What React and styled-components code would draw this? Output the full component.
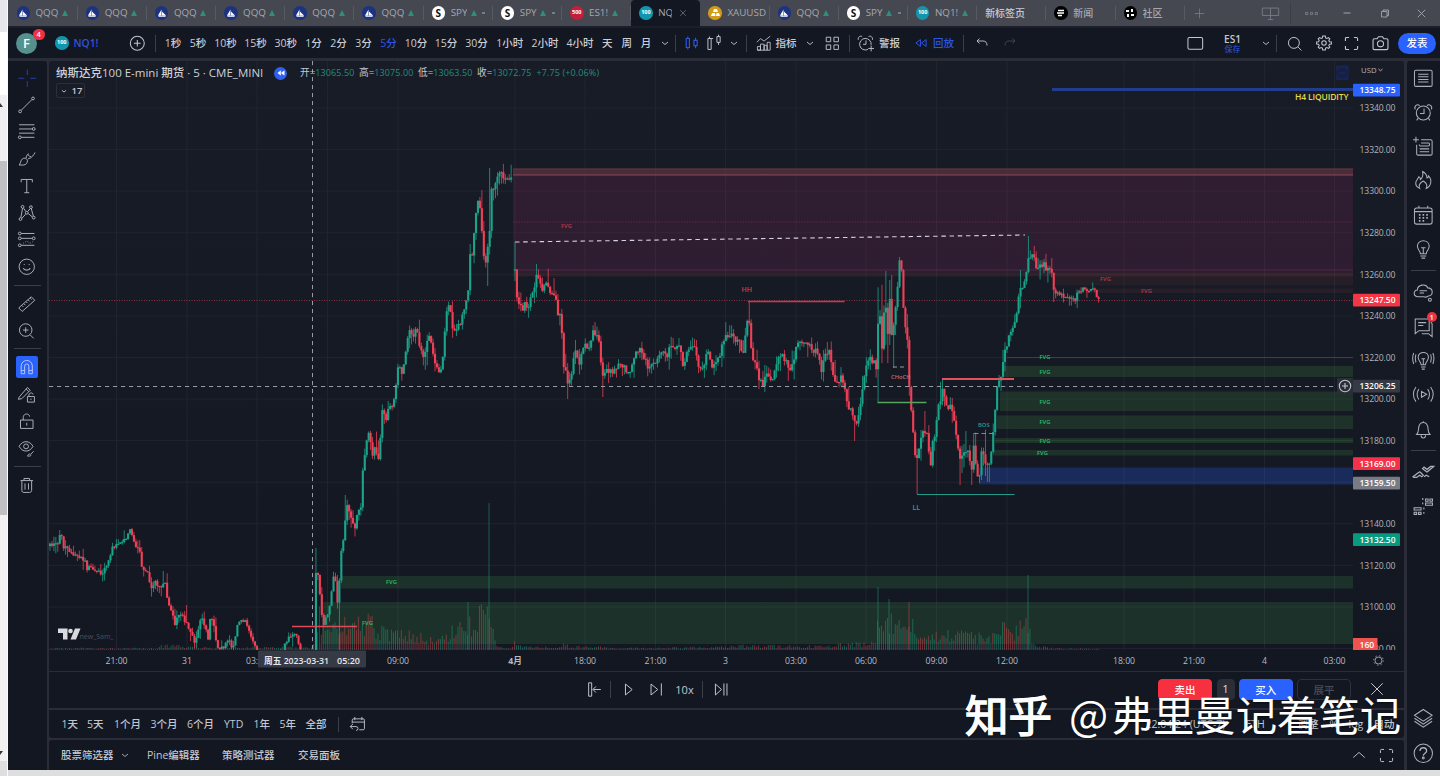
import styled, { createGlobalStyle, css } from 'styled-components'

const GlobalStyle = createGlobalStyle`
  * {
    box-sizing: border-box;
  }
  body {
    margin: 0;
    background: #dededf;
    color: #c4c7d0;
    font-family: 'Open Sans', 'Noto Sans CJK SC', sans-serif;
    font-size: 11px;
    line-height: 1;
    overflow: hidden;
  }
`

const Desktop = styled.div`
  display: flex;
  align-items: flex-start;
  width: 1440px;
  height: 776px;
`

const PageEdge = styled.div`
  display: flex;
  flex-direction: column;
  width: 7.5px;
  height: 776px;
  flex: none;
  overflow: hidden;
  border-right: 1px solid #fafafa;
`

const EdgePart = styled.div`
  height: ${(props) => props.$h}px;
  padding-top: ${(props) => props.$pad || 0}px;
  background: ${(props) => props.$bg};
  svg {
    display: block;
  }
`

const Window = styled.div`
  display: flex;
  flex-direction: column;
  flex: 1;
  min-width: 0;
  height: 770px;
  background: #2a2d38;
`

const TabBar = styled.div`
  display: flex;
  align-items: center;
  height: 26px;
  flex: none;
  padding-left: 1px;
  background: #454751;
`

const TabItem = styled.div`
  display: flex;
  align-items: center;
  width: 69.2px;
  height: 26px;
  flex: none;
  padding-left: 8px;
  gap: 5.5px;
  color: ${(props) => (props.$bright ? '#c9cbd1' : '#a6a8b0')};
  white-space: nowrap;
  overflow: hidden;
  background: linear-gradient(#575963, #575963) right center / 1px 14px no-repeat;
  ${(props) =>
    props.$active &&
    css`
      background: #131722;
      border-radius: 4px 4px 0 0;
    `}
`

const Favicon = styled.span`
  display: flex;
  align-items: center;
  justify-content: center;
  width: 13.5px;
  height: 13.5px;
  flex: none;
  border-radius: 50%;
  background: ${(props) => props.$bg};
  color: ${(props) => props.$fg || '#fff'};
  font-size: ${(props) => props.$size || 5.5}px;
  font-weight: 700;
`

const TabText = styled.span`
  flex: none;
  max-width: ${(props) => props.$max || 60}px;
  overflow: hidden;
  font-size: ${(props) => props.$size || 9.8}px;
  line-height: 14px;
  font-weight: 500;
`

const UpMark = styled.i`
  border: 3.3px solid transparent;
  border-top: 0;
  border-bottom: 6.5px solid #2f8f7b;
  margin-left: -2px;
`

const MoreMark = styled.i`
  width: 3px;
  height: 2px;
  background: #6d8580;
`

const WindowControls = styled.div`
  display: flex;
  align-items: center;
  margin-left: auto;
  color: #a4a6ae;
`

const Slot = styled.span`
  display: flex;
  align-items: center;
  justify-content: center;
  flex: none;
  position: relative;
  width: ${(props) => props.$w}px;
  color: ${(props) => props.$color || 'inherit'};
  white-space: nowrap;
`

const Spacer = styled.div`
  flex: 1;
`

const Divider = styled.span`
  width: 1px;
  height: ${(props) => props.$h || 17}px;
  flex: none;
  margin: 0 ${(props) => props.$gap || 0}px;
  background: #3c3f4a;
`

const Toolbar = styled.div`
  display: flex;
  align-items: center;
  height: 32px;
  flex: none;
  margin-bottom: 2.5px;
  background: #131722;
  border-top: 2px solid #1c1f2b;
`

const Avatar = styled.span`
  display: flex;
  align-items: center;
  justify-content: center;
  width: 21px;
  height: 21px;
  border-radius: 50%;
  background: #55918f;
  color: #fff;
  font-size: 13px;
  font-weight: 600;
  position: relative;
`

const Badge = styled.span`
  position: absolute;
  top: ${(props) => props.$top}px;
  left: ${(props) => props.$left}px;
  display: flex;
  align-items: center;
  justify-content: center;
  width: ${(props) => props.$size}px;
  height: ${(props) => props.$size}px;
  border-radius: 50%;
  background: #ee3144;
  color: #fff;
  font-size: 7.5px;
  font-weight: 600;
`

const SymbolName = styled.span`
  width: 58.5px;
  padding-left: 5px;
  color: #3452d8;
  font-size: 10.3px;
  font-weight: 600;
`

const Interval = styled(Slot)`
  font-size: 10.5px;
  font-weight: 500;
  color: ${(props) => (props.$active ? '#2c55e8' : '#cbcdd5')};
`

const ToolbarRight = styled.div`
  display: flex;
  align-items: center;
  margin-left: auto;
`

const LayoutName = styled.div`
  display: flex;
  flex-direction: column;
  align-items: center;
  gap: 1px;
  width: 51px;
  font-size: 10px;
  font-weight: 600;
  small {
    font-size: 8px;
    font-weight: 400;
    color: #2c55e8;
  }
`

const Publish = styled.button`
  width: 38px;
  height: 21px;
  margin: 0 4px 0 3px;
  padding: 0 0 1px;
  border: none;
  border-radius: 11px;
  background: #2962ff;
  color: #fff;
  font: 500 10.5px 'Noto Sans CJK SC', sans-serif;
`

const Body = styled.div`
  display: flex;
  flex: 1;
  min-height: 0;
`

const LeftRail = styled.div`
  display: flex;
  flex-direction: column;
  align-items: center;
  width: 39px;
  flex: none;
  margin-right: 2.5px;
  padding-top: 4px;
  background: #131722;
  border-radius: 0 3px 0 0;
`

const ToolButton = styled.div`
  display: flex;
  align-items: center;
  justify-content: center;
  width: 22px;
  height: 22px;
  flex: none;
  margin: 2.5px 0;
  border-radius: 2px;
  color: ${(props) => props.$color || '#adb0b9'};
  background: ${(props) => (props.$active ? '#2962ff' : 'transparent')};
`

const RailLine = styled.div`
  width: ${(props) => props.$w}px;
  height: 1px;
  flex: none;
  margin: ${(props) => props.$gap}px 0;
  background: #3c3f4a;
`

const RightRail = styled.div`
  display: flex;
  flex-direction: column;
  align-items: center;
  width: 33.5px;
  flex: none;
  margin-left: 3px;
  padding-top: 0.5px;
  background: #131722;
  border-radius: 3px 0 0 0;
`

const WidgetButton = styled.div`
  display: flex;
  align-items: center;
  justify-content: center;
  position: relative;
  width: 33px;
  height: 34.2px;
  flex: none;
  color: #adb0b9;
`

const Center = styled.div`
  display: flex;
  flex-direction: column;
  flex: 1;
  min-width: 0;
`

const ChartPane = styled.div`
  position: relative;
  height: 610.5px;
  flex: none;
  overflow: hidden;
  border-radius: 3px 3px 0 0;
  background: linear-gradient(#181c27, #131722);
  svg {
    display: block;
  }
`

const Legend = styled.div`
  position: absolute;
  top: 5px;
  left: 7px;
  display: flex;
  align-items: center;
  height: 15px;
  white-space: nowrap;
`

const LegendTitle = styled.span`
  width: 218px;
  font-size: 11.5px;
  font-weight: 500;
  color: #cfd1d8;
`

const RewindDot = styled.span`
  display: flex;
  align-items: center;
  justify-content: center;
  width: 13px;
  height: 13px;
  border-radius: 50%;
  background: #2f5ff0;
  color: #fff;
  margin-right: 13px;
`

const Quote = styled.span`
  width: ${(props) => props.$w}px;
  font-size: 9.7px;
  b {
    font-weight: 400;
    font-size: 9px;
    letter-spacing: 0.12px;
    color: #238e7c;
  }
`

const Collapse = styled.div`
  position: absolute;
  top: 22.5px;
  left: 7px;
  display: flex;
  align-items: center;
  justify-content: center;
  gap: 3px;
  width: 29px;
  height: 15px;
  border: 1px solid #2b2f3a;
  border-radius: 2px;
  font-size: 9.5px;
  font-weight: 600;
`

const BarRow = styled.div`
  display: flex;
  align-items: center;
  height: ${(props) => props.$h}px;
  flex: none;
  margin-top: ${(props) => props.$gap}px;
  padding: ${(props) => props.$top || 0}px 0 ${(props) => props.$bottom || 0}px ${(props) => props.$pad || 0}px;
  background: #131722;
  border-radius: ${(props) => props.$round || '0'};
  font-weight: 500;
  white-space: nowrap;
`

const RowItem = styled.span`
  display: flex;
  align-items: center;
  width: ${(props) => props.$w}px;
  flex: none;
  font-size: 10.5px;
`

const Push = styled.div`
  display: flex;
  align-items: center;
  margin-left: auto;
`

const TradeButton = styled.button`
  width: ${(props) => props.$w}px;
  height: 21px;
  margin-right: 4.5px;
  padding: 0;
  border: 1px solid ${(props) => props.$line || props.$bg};
  border-radius: 4px;
  background: ${(props) => props.$bg};
  color: ${(props) => props.$fg || '#fff'};
  font: 500 10.5px 'Open Sans', 'Noto Sans CJK SC', sans-serif;
`

const Signature = styled.div`
  position: absolute;
  left: 965px;
  top: 689px;
  display: flex;
  align-items: center;
  height: 50px;
  color: #fff;
  font-family: 'Noto Sans CJK SC', sans-serif;
  font-size: 41.4px;
  white-space: nowrap;
  text-shadow: 0 1px 2px rgba(0, 0, 0, 0.5);
  strong {
    width: 104px;
    font-size: 43.5px;
    font-weight: 400;
    -webkit-text-stroke: 1.4px #fff;
  }
  span {
    width: 42.5px;
  }
`

// all glyphs share a 28 unit box
const glyphs = {
  cross: <path d="M14 2v8M14 18v8M2 14h8M18 14h8" />,
  trend: (
    <>
      <circle cx="4.5" cy="23.5" r="2" />
      <circle cx="23" cy="5" r="2" />
      <path d="M6 22 21.5 6.500" />
    </>
  ),
  fib: (
    <>
      <path d="M3 4h22M3 10h19M3 16h22M6 22h19" />
      <circle cx="24" cy="10" r="2" />
      <circle cx="4" cy="22" r="2" />
    </>
  ),
  brush: <path d="M3 23c2-1 2-7 5-9s7 0 7 3-2 6-6 6zM13 13c1-4 2-6 4-6M16 14c6-1 8-6 10-9M16 8c1 2 2 3 4 3" />,
  text: <path d="M6 9V5h16v4M14 5v19M10.500 24h7" />,
  pattern: (
    <>
      <circle cx="5" cy="23" r="2" />
      <circle cx="8" cy="5.500" r="2" />
      <circle cx="14" cy="14" r="2" />
      <circle cx="20" cy="6" r="2" />
      <circle cx="24" cy="21" r="2" />
      <path d="M5.500 21 8 7.500M9.500 7.500l3 4.500M19 8l-3.500 4M20.500 8l3 11M7 22l5.500-6M16 15l6 5" />
    </>
  ),
  forecast: (
    <>
      <circle cx="4" cy="5" r="2" />
      <circle cx="4" cy="12" r="2" />
      <circle cx="4" cy="22" r="2" />
      <circle cx="24" cy="12" r="2" />
      <path d="M6 5h19M6 12h16M6 22h19" />
      <path d="m9 19 5-3 5 3 5-3" strokeDasharray="1 2" />
    </>
  ),
  smile: (
    <>
      <circle cx="14" cy="14" r="11" />
      <path d="M9 16c1.500 4 8.500 4 10 0M10.500 10.500v1M17.500 10.500v1" strokeWidth="1.8" />
    </>
  ),
  ruler: <path d="m2.500 20 18-16 5 5-18 16zM7 16.500l2 2M10 14l2 2M13 11l2 2M16 8.500l2 2M19 6l2 2" />,
  zoom: (
    <>
      <circle cx="12.500" cy="13" r="9" />
      <path d="M12.500 9v8M8.500 13h8M19 20l5 5" />
    </>
  ),
  magnet: <path d="M6 24V13a8 8 0 0 1 16 0v11h-5V13a3 3 0 0 0-6 0v11zM6 19.500h5M17 19.500h5" />,
  pencilLock: (
    <path d="M3 19 15 5l4 4L7 21l-5 1zM13 7l4 4M15 18h10v8H15zM17 18v-2c0-4 6-4 6-1M20 21v2" />
  ),
  lock: <path d="M5 13h18v12H5zM9 13V9c0-6 9-6 9-1M14 17v4" />,
  eye: (
    <>
      <path d="M3 12c5-9 15-9 20 0-5 9-15 9-20 0zM15 26c1-1 1-3 3-3s3 3 0 3zM20 23l4-4" />
      <circle cx="13" cy="12" r="3.500" />
    </>
  ),
  trash: <path d="M5 8h18M10 8V5h8v3M7 8v14c0 2 1 3 3 3h8c2 0 3-1 3-3V8M11.500 12v9M16.500 12v9" />,
  list: <path d="M4 3h20q2 0 2 2v18q0 2-2 2H4q-2 0-2-2V5q0-2 2-2zM7 8.500h14M7 12h14M7 15.500h14M7 19h14" />,
  alarm: (
    <>
      <circle cx="14" cy="15" r="9.500" />
      <path d="M15 9v6.500H9.500M3 10c-2-5 3-8 6-5M25 10c2-5-3-8-6-5M7 22l-2 3M21 22l2 3" />
    </>
  ),
  alarmPlus: (
    <>
      <path d="M22 17a9 9 0 1 0-5 7M14 10v6H9.500M2 9c-1-4 3-7 6-5M24 9c1-4-3-7-6-5M22 18v9M17.500 22.500h9" />
    </>
  ),
  addList: <path d="M11 5h13q2 0 2 2v17q0 2-2 2H7q-2 0-2-2V12M0 5h8M4 1v8M11 9.500h10q1.500 0 1.500 2t-1.500 2H10q-1.500 0-1.500-2M9 17.500h13M9 21.500h13" />,
  fire: <path d="M9 25c-4-2-6-5-5-9 1-3 3-4 4-7 2 1 2 3 2 4 3-2 4-6 3-11 4 2 6 5 6 9 1 0 2-1 2-3 3 3 4 6 3 10-1 4-3 6-6 7 2-4 1-7-4-10-5 3-7 6-5 10z" />,
  calendar: (
    <>
      <path d="M5 4h18q3 0 3 3v16q0 3-3 3H5q-3 0-3-3V7q0-3 3-3zM8 1v3M20 1v3M2 9h24" />
      <path d="M8 13.500h2.200M13 13.500h2.200M18 13.500h2.200M8 17.500h2.200M13 17.500h2.200M18 17.500h2.200M8 21.500h2.200M13 21.500h2.200" strokeWidth="2.400" />
    </>
  ),
  bulb: <path d="M10 20c0-4-4-5-4-10 0-10 16-10 16 0 0 5-4 6-4 10zM10 23h8M11.500 26h5M11 12h6M14 12v8" />,
  cloud: (
    <>
      <path d="M7 20c-7 0-7-9-1-9 0-8 12-9 14-3 8 0 8 11 1 11-3 3-6 1-7 1zM9 12h10M9 15h6" />
      <circle cx="23" cy="24" r="2" />
    </>
  ),
  chat: <path d="M3 4h17q2 0 2 2v14H8l-5 4zM7 9h11M7 13h7M24 9q2 0 2 2v17l-5-4H12" />,
  bulbWave: (
    <path d="M11 20c0-4-4-5-4-10 0-9 14-9 14 0 0 5-4 6-4 10zM11 23h6M12 26h4M11.500 12h5M14 12v8M4 6q-2 5 0 11M1 4q-3 7 0 15M24 6q2 5 0 11M27 4q3 7 0 15" />
  ),
  stream: <path d="m11.500 10 7 4-7 4zM8 7q-5 7 0 14M20 7q5 7 0 14M4 4q-7 10 0 20M24 4q7 10 0 20" />,
  bell: <path d="M5 21c3-3 2-6 3-11 2-7 10-7 12 0 1 5 0 8 3 11zM11 22c0 5 6 5 6 0M14 3v2" />,
  shake: <path d="m0 20 8-6q1-1 2 0l4 4-2 2-3-2-4 3H1zM28 6l-8 7q-1 1-2 0l-5-4 2-2 4 3 5-4zM15 20l3-2 4 2" strokeWidth="1.700" />,
  dom: (
    <>
      <path d="M17 4h3.500v3H17zM23 4h3.500v3H23zM17 9.500h9.500v3H17zM1.500 16H11v3H1.500zM1.500 22H5v3H1.500zM7.500 22H11v3H7.500z" />
      <path d="M12.500 4h1.500M12.500 10h1.500M14 17h1.500M14 23h1.500" strokeWidth="2.600" />
    </>
  ),
  layers: <path d="m14 2 12 8-12 8L2 10zM2 14l12 8 12-8M2 18l12 8 12-8" />,
  help: (
    <>
      <circle cx="14" cy="14" r="12.500" />
      <path d="M9.500 11c0-6 9-6 9 0 0 3-4.500 3-4.500 6.500" strokeWidth="1.800" />
      <circle cx="14" cy="20.500" r="1.300" />
    </>
  ),
  plusCircle: (
    <>
      <circle cx="14" cy="14" r="9.500" />
      <path d="M14 9.500v9M9.500 14h9" />
    </>
  ),
  down: <path d="m8 12 6 5 6-5" />,
  up: <path d="m5 18 9-8 9 8" />,
  candles: <path d="M5 7h5v14H5zM7.500 4v3M7.500 21v3M17 10h5v8h-5zM19.500 6v4M19.500 18v4" />,
  hollow: <path d="M3 7h5v17H3zM5.500 4v3M17 4h5v9h-5zM19.500 1v3M19.500 13v4M8 7h3" />,
  indicators: <path d="M3 12l6-6 6 4 10-8M4 25v-6h5v6zM9 25V15h6v10M15 25v-8h5v8M20 25V12h5v13M4 25h21" />,
  grid: <path d="M5 5h7v7H5zM17 5h7v7h-7zM5 17h7v7H5zM17 17h7v7h-7z" />,
  rewind: <path d="M13 8v12l-8-6zM23 8v12l-8-6z" />,
  undo: <path d="m9 5-5 5 5 5M4 10h12q8 0 8 9" />,
  redo: <path d="m19 5 5 5-5 5M24 10H12q-8 0-8 9" />,
  rect: <path d="M6 6h16q2 0 2 2v12q0 2-2 2H6q-2 0-2-2V8q0-2 2-2z" />,
  search: (
    <>
      <circle cx="13" cy="13" r="9" />
      <path d="m19.500 19.500 6 6" />
    </>
  ),
  gear: (
    <>
      <path d="m12 3-.5 3-2 1L7 5.500 5 7.500 6.500 10l-1 2-3 .5v3l3 .5 1 2L5 20.500 7 22.500 9.500 21l2 1 .5 3h4l.5-3 2-1 2.500 1.500 2-2L21.500 18l1-2 3-.5v-3l-3-.5-1-2L23 7.500 21 5.500 18.500 7l-2-1L16 3z" />
      <circle cx="14" cy="14" r="3.500" />
    </>
  ),
  full: <path d="M4 10V6q0-2 2-2h4M18 4h4q2 0 2 2v4M24 18v4q0 2-2 2h-4M10 24H6q-2 0-2-2v-4" />,
  camera: (
    <>
      <path d="M5 7h4l2-3h6l2 3h4q2 0 2 2v12q0 2-2 2H5q-2 0-2-2V9q0-2 2-2z" />
      <circle cx="14" cy="14.500" r="4.500" />
    </>
  ),
  close: <path d="M6 6l16 16M22 6 6 22" />,
  minus: <path d="M7 14h14" strokeWidth="2" />,
  plus: <path d="M14 5v18M5 14h18" />,
  restore: <path d="M7 11h11v11H7zM10 11V8h11v11h-3" strokeWidth="1.800" />,
  dots: <path d="M3 12h4v4H3zM12 12h4v4h-4zM21 12h4v4h-4z" />,
  screens: <path d="M2 6h24v11H2zM14 6v17M10 23h8" />,
  goBar: <path d="M6 3h5v22H6zM26 14H14M18 9l-5 5 5 5" />,
  play: <path d="M9 5v18l11-9z" />,
  step: <path d="M5 5v18l11-9zM22 4v20" />,
  stepEnd: <path d="M4 5v18l10-9zM18 4v20M23 4v20" />,
  goDate: <path d="M5 13V8q0-2 2-2h15q2 0 2 2v13q0 2-2 2h-6M9 3v5M20 3v5M5 11h19M2 18h9q3 0 3 3t-3 3M6 14l-4 4 4 4" />,
}

const Icon = ({ name, size = 20.6, stroke = 1.4, fill = 'none' }) => (
  <svg
    width={size}
    height={size}
    viewBox="0 0 28 28"
    fill={fill}
    stroke="currentColor"
    strokeWidth={stroke}
    overflow="visible"
  >
    {glyphs[name]}
  </svg>
)

const Boat = () => (
  <svg width="10" height="10" viewBox="0 0 10 10" fill="#fff">
    <path d="M1 7.500 4.500 1.500v6zM5 7.500V3.500l4 4zM1 7.800h8l-.6 1H1.800z" />
  </svg>
)

const tabs = [
  ...Array(6).fill({ icon: 'boat', text: 'QQQ', up: true }),
  { icon: 'spy', text: 'SPY', up: true, more: true },
  { icon: 'spy', text: 'SPY', up: true, more: true },
  { icon: 'es', text: 'ES1!', up: true },
  { icon: 'nq', text: 'NQ', active: true },
  { icon: 'gold', text: 'XAUUSD' },
  { icon: 'boat', text: 'QQQ', up: true },
  { icon: 'spy', text: 'SPY', up: true, more: true },
  { icon: 'nq', text: 'NQ1!', up: true },
  { text: '新标签页', bright: true },
  { icon: 'news', text: '新闻' },
  { icon: 'people', text: '社区' },
]

const favicons = {
  boat: <Favicon $bg="#1c3382"><Boat /></Favicon>,
  spy: <Favicon $bg="#fff" $fg="#111" $size={10}>S</Favicon>,
  es: <Favicon $bg="#c21f3a">500</Favicon>,
  nq: <Favicon $bg="#1295ad">100</Favicon>,
  gold: (
    <Favicon $bg="#d29a19">
      <svg width="9" height="8" viewBox="0 0 9 8" fill="#fff">
        <path d="M3 0h3l1 3H2zM1 4h3l.5 3H0zM5.500 4H8l1 3H5z" />
      </svg>
    </Favicon>
  ),
  news: (
    <Favicon $bg="#000">
      <svg width="8" height="8" viewBox="0 0 8 8" stroke="#fff" strokeWidth="1.300">
        <path d="M1 1.500h6M0 4h7M1 6.500h4" />
      </svg>
    </Favicon>
  ),
  people: (
    <Favicon $bg="#000">
      <svg width="8" height="8" viewBox="0 0 8 8" fill="#fff">
        <path d="M0 1h3v2H0zM5 0h2v3H5zM1 5h2v3H1zM5 5h3v2H5z" />
      </svg>
    </Favicon>
  ),
}

const intervals = [
  ['1秒', 25], ['5秒', 25], ['10秒', 30], ['15秒', 30], ['30秒', 30.5], ['1分', 25],
  ['2分', 25], ['3分', 25], ['5分', 25], ['10分', 30], ['15分', 30], ['30分', 31],
  ['1小时', 35.5], ['2小时', 35], ['4小时', 35], ['天', 19.5], ['周', 19.5], ['月', 19],
]

const leftTools = [
  'cross', 'trend', 'fib', 'brush', 'text', 'pattern', 'forecast', 'smile', '-',
  'ruler', 'zoom', '-', 'magnet', 'pencilLock', 'lock', 'eye', '-', 'trash',
]

const widgets = [
  'list', 'alarm', 'addList', 'fire', 'calendar', 'bulb', '-',
  'cloud', 'chat', 'bulbWave', 'stream', 'bell', '-', 'shake', 'dom',
]

const ranges = [
  ['1天', 25.5], ['5天', 27], ['1个月', 36.5], ['3个月', 36.5], ['6个月', 37],
  ['YTD', 29.5], ['1年', 26], ['5年', 26], ['全部', 32],
]

// pane coordinates: x 49..1403, y 61..671
const runs = [
  '50 546 54 541 58 544 60 534 62 537 64 548 70 550 73 558 78 555 84 559 87 569 91 566 95 571 99 569 102 576 105 569 108 560 112 549 116 544 121 542 126 538 130 531 132 537 135 546 139 547 142 570 147 572 151 588 155 580 159 588 163 584 165 582 168 602 172 612 175 626 178 612 182 617 187 622 190 630 194 643 197 636 201 618 205 625 208 641 210 618 214 625 217 645 220 651 226 643 230 641 233 649 237 628 241 620 245 622 250 635 254 645 258 652',
  '279 652 283 649 288 640 292 633 296 634 299 644 302 653',
  '314 655 316 572 318 573 320 598 323 625 327 615 330 604 333 577 335 575 337 592 338 622 340 560 343 545 345 520 347 507 349 510 352 519 355 528 358 510 361 505 362 480 365 450 368 427 370 440 372 455 375 447 378 460 381 435 383 402 385 425 388 407 392 405 395 395 397 370 399 362 402 372 405 360 407 345 409 325 413 340 416 328 419 343 421 345 423 362 426 345 429 332 432 350 435 362 439 374 442 366 445 330 447 305 449 303 451 315 453 328 456 330 460 325 463 315 466 302 468 300 469 258 472 255 474 235 477 205 479 197 481 215 483 255 486 264 488 245 490 225 491 190 494 192 496 185 497 174 501 175 505 179 508 180 511 175 513 172',
  '515 270 517 295 519 303 522 310 526 303 528 311 531 298 534 290 536 273 539 277 543 292 546 280 549 290 552 293 555 294 557 310 561 318 563 360 567 380 570 383 573 360 575 350 579 365 583 352 586 345 588 355 591 340 594 330 597 335 599 345 601 365 603 373 607 370 612 371 618 366 624 368 630 372 633 362 636 353 640 346 644 360 648 366 655 364 660 352 668 355 670 345 676 350 680 348 683 365 688 348 692 343 695 350 699 370 704 365 707 352 711 358 713 370 716 362 720 355 724 340 728 335 734 338 740 343 743 356 746 330 748 312 750 335 752 358 755 362 759 378 763 387 767 372 772 382 776 362 780 355 785 360 790 370 794 362 797 345 802 340 808 345 814 350 818 353 821 373 825 355 829 350 833 375 836 385 841 378 845 390 848 408 852 410 857 425 860 410 863 385 867 365 870 358 874 362 877 376 878 320 880 308 882 342 884 310 885 276 887 332 890 306 892 340 894 325 897 305 898 270 901 270 903 300 905 325 907 328 908 370 910 400 912 420 914 445 917 458 918 468 920 440 923 430 927 432 930 468 933 440 937 420 940 400 943 390 945 400 947 412 951 408 954 425 957 440 960 458 964 450 968 447 971 476 974 443 977 470 979 478 982 450 986 468 989 468 991 450 993 430 996 400 998 380 1000 385 1002 365 1004 355 1007 345 1010 330 1016 322 1019 290 1022 290 1025 280 1028 258 1033 257 1036 265 1040 267 1043 262 1047 270 1052 270 1054 293 1058 292 1062 296 1068 298 1075 301 1079 290 1085 288 1089 293 1092 285 1096 294 1099 299',
]

const spikes = [
  [60, 530], [130, 529], [164, 571], [187, 605], [316.5, 548], [345, 495], [490, 168], [481, 190],
  [487, 286], [515.5, 242], [536, 264], [554, 278], [568, 399], [603, 397], [595, 322], [748.5, 302],
  [827, 342], [854, 441], [878, 402], [890, 280], [899, 257], [893, 368], [917.5, 494], [924, 411],
  [943, 379], [960, 485], [972, 485], [974.5, 433], [980, 483], [990, 482], [1028.500, 236], [1020, 270],
  [1054, 302], [1073, 302], [338.500, 650], [885, 271], [885, 345], [887, 363], [904, 285],
]

const STEP = 1.952

function random(seed) {
  let s = seed
  return () => {
    s = (s * 16807) % 2147483647
    return s / 2147483647
  }
}

function buildCandles() {
  const rnd = random(73)
  const out = []
  runs.forEach((run) => {
    const n = run.split(' ').map(Number)
    let prev = n[1]
    let seg = 0
    for (let x = n[0]; x <= n[n.length - 2]; x += STEP) {
      while (seg < n.length - 4 && n[seg + 2] < x) seg += 2
      const t = (x - n[seg]) / (n[seg + 2] - n[seg])
      let wild = 0.8
      if (x > 360 && x < 1052) wild = 1.15
      if (x > 915 && x < 995) wild = 1.9
      if (x > 878 && x < 902) wild = 3.2
      const close = n[seg + 1] + t * (n[seg + 3] - n[seg + 1]) + (rnd() - 0.5) * 6 * wild
      const top = Math.min(prev, close)
      const bottom = Math.max(prev, close)
      out.push({
        x,
        up: close < prev,
        top,
        bottom: Math.max(bottom, top + 1.2),
        high: top - rnd() * rnd() * 14 * wild,
        low: bottom + rnd() * rnd() * 14 * wild,
      })
      prev = close
    }
  })
  spikes.forEach(([x, y]) => {
    const bar = out.reduce((a, b) => (Math.abs(b.x - x) < Math.abs(a.x - x) ? b : a))
    if (y < bar.top) bar.high = y
    else bar.low = y
  })
  return out
}

const volumeLevels = [
  [49, 2], [155, 2], [164, 6], [200, 3], [312, 3], [316, 32], [320, 48], [325, 22], [345, 36], [365, 36],
  [390, 20], [410, 22], [430, 12], [445, 20], [455, 24], [465, 26], [478, 38], [487, 50], [493, 22], [497, 4],
  [512, 3], [515, 12], [522, 4], [560, 3], [564, 7], [570, 4], [650, 2], [725, 4], [750, 5], [830, 4], [846, 7],
  [872, 9], [876, 10], [879, 40], [892, 40], [900, 28], [909, 42], [915, 28], [930, 20], [950, 18], [975, 16],
  [990, 16], [1000, 28], [1015, 22], [1026, 30], [1031, 18], [1035, 4], [1048, 3], [1052, 2], [1100, 1.5],
]

function buildVolume() {
  const rnd = random(19)
  const out = []
  let i = 0
  for (let x = 50; x < 1100; x += STEP) {
    while (i < volumeLevels.length - 2 && volumeLevels[i + 1][0] < x) i += 1
    const [x0, h0] = volumeLevels[i]
    const [x1, h1] = volumeLevels[i + 1]
    const h = (h0 + ((x - x0) / (x1 - x0)) * (h1 - h0)) * (0.35 + rnd() * 0.8)
    out.push({ x, h, up: rnd() > 0.46 })
  }
  out.push({ x: 489, h: 147, up: true }, { x: 878, h: 63, up: true }, { x: 889, h: 51, up: true })
  out.push({ x: 909, h: 48, up: false }, { x: 1028, h: 75, up: true }, { x: 468, h: 48, up: true })
  return out
}

const candles = buildCandles()
const volume = buildVolume()

const hours = [
  [116.500, '21:00'], [187, '31'], [257, '03:00'], [327.500, ''], [398, '09:00'], [515, '4月'], [585, '18:00'],
  [655.500, '21:00'], [725.500, '3'], [796, '03:00'], [866, '06:00'], [936.500, '09:00'], [1007, '12:00'],
  [1124, '18:00'], [1194, '21:00'], [1264.500, '4'], [1334.500, '03:00'],
]

const levels = Array.from({ length: 14 }, (_, i) => ({ y: 108 + i * 41.580, price: 13340 - i * 20 }))

const greenZones = [
  [1004, 366, 11], [1000, 391.500, 19.500], [997, 415.500, 13.500], [995, 438, 5], [993, 450, 5.500],
  [341, 576, 12.500], [322, 602, 42],
]

const notes = [
  [561, 228, 'FVG', '#c23a4c'], [1100, 281, 'FVG', '#b23a48'], [1141, 292.500, 'FVG', '#b23a48'],
  [1039.500, 359, 'FVG', '#1fc569'], [1039.500, 373.500, 'FVG', '#1fc569'], [1039.500, 403.500, 'FVG', '#1fc569'],
  [1039.500, 424, 'FVG', '#1fc569'], [1039.500, 442.500, 'FVG', '#1fc569'], [1037, 454.500, 'FVG', '#1fc569'],
  [386, 583.500, 'FVG', '#1fc569'], [362, 624.500, 'FVG', '#1fc569'],
  [978, 427, 'BOS', '#2aa08c'], [891, 378.500, 'CHoCH', '#b9727c'],
]

const priceTags = [
  [90, '13348.75', '#2962ff'], [300, '13247.50', '#f23645'], [386, '13206.25', '#363a45'],
  [463.500, '13169.00', '#f7304a'], [483, '13159.50', '#787b86'], [539.500, '13132.50', '#089981'],
]

function Chart() {
  return (
    <svg
      width="1354"
      height="610"
      viewBox="49 61 1354 610"
      fontFamily="'Open Sans', 'Noto Sans CJK SC', sans-serif"
      fontSize="9"
    >
      <defs>
        <clipPath id="plot">
          <rect x="49" y="61" width="1354" height="589" />
        </clipPath>
      </defs>
      <g stroke="#20242f" strokeWidth="1">
        {hours.map(([x]) => (
          <path key={x} d={`M${x} 61V650`} />
        ))}
        {levels.map((l) => (
          <path key={l.price} d={`M49 ${l.y}H1353`} />
        ))}
      </g>
      <rect x="513" y="168.500" width="840" height="7" fill="#7a3f4a" fillOpacity=".5" />
      <rect x="513" y="175.500" width="840" height="95" fill="#9c27b0" fillOpacity=".055" />
      <rect x="513" y="175.500" width="840" height="95" fill="#e83a60" fillOpacity=".085" />
      <rect x="513" y="270.500" width="840" height="6" fill="#9a4050" fillOpacity=".16" />
      <rect x="1055" y="273" width="298" height="12.500" fill="#a04040" fillOpacity=".11" />
      <rect x="1075" y="288.500" width="278" height="4.500" fill="#a04040" fillOpacity=".13" />
      <path d="M513 169H1353" stroke="#62393f" strokeWidth=".8" />
      <path d="M513 174.800H1353" stroke="#7d4053" strokeWidth="1.200" />
      <path d="M513 270H1353" stroke="#50294c" strokeWidth="1.200" />
      <path d="M513 222H1353" stroke="#66294f" strokeDasharray="1.500 1.300" strokeWidth=".9" />
      {greenZones.map(([x, y, h]) => (
        <rect key={y} x={x} y={y} width={1353 - x} height={h} fill="#4caf50" fillOpacity=".17" />
      ))}
      <path d="M1007 357.500H1353" stroke="#31493f" />
      <path d="M995 440.500H1353" stroke="#29462f" strokeWidth=".7" />
      <rect x="979" y="467.500" width="374" height="17" fill="#2962ff" fillOpacity=".25" />
      <path d="M1052 89.500H1353" stroke="#223d8c" strokeWidth="2.800" />
      <text x="1295" y="100" fill="#e4d84c" fontSize="8.500" fontWeight="600" textLength="53.500">
        H4 LIQUIDITY
      </text>

      <g clipPath="url(#plot)">
        {volume.map((v, i) => (
          <rect
            key={i}
            x={v.x - 0.5}
            y={650 - v.h}
            width="1"
            height={v.h}
            fill={v.up ? '#229c7c' : '#d0484b'}
            fillOpacity=".5"
          />
        ))}
        {candles.map((c, i) => (
          <g key={i} fill={c.up ? '#1aa58a' : '#f04056'}>
            <rect x={c.x - 0.45} y={c.high} width=".900" height={c.low - c.high} fillOpacity=".85" />
            <rect x={c.x - 1.05} y={c.top} width="2.100" height={c.bottom - c.top} />
          </g>
        ))}
      </g>

      <path d="M49 300.500H1353" stroke="#b03b4c" strokeDasharray="1 1.500" strokeWidth=".8" />
      <path d="M515 242 1025 235" stroke="#d8d2dc" strokeDasharray="4.500 3.700" strokeWidth="1.100" />
      <path d="M748 301.500H844.500" stroke="#cc3a4c" strokeWidth="1.300" />
      <path d="M942 379H1014" stroke="#e05260" strokeWidth="1.800" />
      <path d="M292 626.500H357" stroke="#e0495a" strokeWidth="1.500" />
      <path d="M877.500 402.500H926.500" stroke="#57a65e" strokeWidth="1.600" />
      <path d="M917 494.500H1014.500" stroke="#249a8b" strokeWidth="1.200" />
      <path d="M893 367H907" stroke="#a8a9ae" strokeDasharray="4 3" strokeWidth=".9" />
      <path d="M974 433.500H994" stroke="#57b0a1" strokeDasharray="4.500 3" strokeWidth=".9" />
      {notes.map(([x, y, text, color]) => (
        <text key={`${x}-${y}`} x={x} y={y} fill={color} fontSize="5.800" fontWeight="600">
          {text}
        </text>
      ))}
      <text x="741.500" y="291.500" fill="#d23d50" fontSize="7" fontWeight="600">HH</text>
      <text x="912.500" y="509.500" fill="#26a390" fontSize="7" fontWeight="600">LL</text>

      <g stroke="#989ba4" strokeDasharray="4.200 3.800" strokeWidth="1">
        <path d="M312.500 61V650" />
        <path d="M49 386.500H1337" />
      </g>

      <g fill="#d9dae0">
        <path d="M58 628.500h9.500v11H63v-6.500h-5z" />
        <circle cx="70.500" cy="631" r="2.300" />
        <path d="M75 628.500h5.500l-4.500 11h-5.500z" />
      </g>
      <text x="79.500" y="638.500" fill="#4d505b" fontSize="7" textLength="34">
        new_Sam_
      </text>

      <rect x="1337" y="378" width="16" height="16" fill="#2a2e39" />
      <g stroke="#c4c6cd" fill="none" strokeWidth="1.100">
        <circle cx="1345" cy="386" r="5.700" />
        <path d="M1345 383v6M1342 386h6" />
      </g>
      <rect x="1336" y="65" width="13" height="15" fill="#172042" />
      <g stroke="#1a2a66" fill="none">
        <path d="M1337 70v-3h10v3M1337 76v3h10v-3M1339 73h6" />
      </g>

      <text x="1361" y="73" fill="#b2b5be" fontSize="8" textLength="15.500" lengthAdjust="spacingAndGlyphs">USD</text>
      <path d="m1378.500 69 2 1.800 2-1.800" stroke="#b2b5be" fill="none" />
      <g clipPath="url(#plot)" fill="#b0b3bc" fontSize="8.600">
        {levels
          .filter((l) => l.price !== 13160)
          .map((l) => (
            <text key={l.price} x="1359.500" y={l.y + 3.200} textLength="36">
              {l.price.toFixed(2)}
            </text>
          ))}
        <rect x="1353" y="638" width="24.500" height="12" fill="#ef5350" />
        <text x="1359.500" y="647.500" fill="#fff" fontWeight="600">160</text>
      </g>
      {priceTags.map(([y, text, bg]) => (
        <g key={text}>
          <rect x="1353" y={y - 6.200} width="47" height="12.600" rx="1" fill={bg} />
          <text x="1359.500" y={y + 3.300} fill="#fff" fontSize="8.600" fontWeight="600" textLength="36" lengthAdjust="spacingAndGlyphs">
            {text}
          </text>
        </g>
      ))}

      <g fill="#b8bbc3" fontSize="8.700" textAnchor="middle">
        {hours
          .filter(([, text]) => text)
          .map(([x, text]) => (
            <text key={x} x={x} y="663.500" fontWeight={text === '4月' ? 700 : 400}>
              {text}
            </text>
          ))}
      </g>
      <rect x="258" y="650.500" width="108" height="17" rx="1" fill="#363a45" />
      <text x="264" y="664" fill="#e8e9ed" fontSize="9" fontWeight="600" textLength="65" lengthAdjust="spacingAndGlyphs">
        周五 2023-03-31
      </text>
      <text x="337" y="664" fill="#e8e9ed" fontSize="9" fontWeight="600" textLength="23" lengthAdjust="spacingAndGlyphs">
        05:20
      </text>
      <g stroke="#9a9da7" fill="none">
        <circle cx="1378.500" cy="660.500" r="3.500" />
        <circle cx="1378.500" cy="660.500" r="4.800" strokeDasharray="1.300 2.470" />
      </g>
    </svg>
  )
}

export default function App() {
  return (
    <>
      <GlobalStyle />
      <Desktop>
        <PageEdge>
          <EdgePart $h={32} $bg="#e6e7eb" />
          <EdgePart $h={63} $bg="#ffffff" />
          <EdgePart $h={66} $pad={8} $bg="#efeff1">
            <svg width="4" height="4"><path d="M-3 4h6L0 0z" fill="#333" /></svg>
          </EdgePart>
          <EdgePart $h={354} $bg="#c1c1c3" />
          <EdgePart $h={246} $pad={236} $bg="#f1f1f2">
            <svg width="4" height="4"><path d="M-3 0h6L0 4z" fill="#333" /></svg>
          </EdgePart>
          <EdgePart $h={15} $bg="#dedee0" />
        </PageEdge>
        <Window>
          <TabBar>
            {tabs.map((tab, i) => (
              <TabItem key={i} $active={tab.active} $bright={tab.bright}>
                {favicons[tab.icon]}
                <TabText $max={tab.active ? 14 : 60} $size={tab.text.charCodeAt(0) > 255 ? 10 : undefined}>
                  {tab.text}
                </TabText>
                {tab.up && <UpMark />}
                {tab.more && <MoreMark />}
                {tab.active && <Icon name="close" size={10} />}
              </TabItem>
            ))}
            <Slot $w={29} $color="#7d808a"><Icon name="plus" size={15} /></Slot>
            <WindowControls>
              <Slot $w={30} $color="#767983"><Icon name="screens" size={19} /></Slot>
              <Slot $w={11}><Divider $h={22} /></Slot>
              <Slot $w={30} $color="#868891"><Icon name="dots" size={15} /></Slot>
              <Slot $w={42}><Icon name="minus" size={14} /></Slot>
              <Slot $w={34}><Icon name="restore" size={14} /></Slot>
              <Slot $w={38}><Icon name="close" size={13} stroke={2} /></Slot>
            </WindowControls>
          </TabBar>

          <Toolbar>
            <Slot $w={38}>
              <Avatar>
                F
                <Badge $top={-4} $left={17} $size={11.5}>4</Badge>
              </Avatar>
            </Slot>
            <Slot $w={9.5} />
            <Favicon $bg="#1295ad">100</Favicon>
            <SymbolName>NQ1!</SymbolName>
            <Icon name="plusCircle" />
            <Slot $w={7} />
            <Divider />
            <Slot $w={5} />
            {intervals.map(([text, w]) => (
              <Interval key={text} $w={w} $active={text === '5分'}>{text}</Interval>
            ))}
            <Slot $w={18}><Icon name="down" size={14} stroke={1.8} /></Slot>
            <Divider $gap={1} />
            <Slot $w={30} $color="#2c55e8"><Icon name="candles" size={18} stroke={1.8} /></Slot>
            <Slot $w={16}><Icon name="hollow" size={18} stroke={1.5} /></Slot>
            <Slot $w={23}><Icon name="down" size={14} stroke={1.8} /></Slot>
            <Divider />
            <Slot $w={5} />
            <Slot $w={24}><Icon name="indicators" size={17} /></Slot>
            <Interval $w={21}>指标</Interval>
            <Slot $w={27}><Icon name="down" size={14} stroke={1.8} /></Slot>
            <Slot $w={17}><Icon name="grid" size={18} /></Slot>
            <Divider $gap={8} />
            <Slot $w={17}><Icon name="alarmPlus" size={18} /></Slot>
            <Interval $w={30}>警报</Interval>
            <Slot $w={8} />
            <Slot $w={16} $color="#2c55e8"><Icon name="rewind" size={16} stroke={1.7} /></Slot>
            <Interval $w={30} $active>回放</Interval>
            <Divider $gap={4} />
            <Slot $w={28}><Icon name="undo" size={14} stroke={1.8} /></Slot>
            <Slot $w={28} $color="#444853"><Icon name="redo" size={14} stroke={1.8} /></Slot>
            <ToolbarRight>
              <Slot $w={24}><Icon name="rect" /></Slot>
              <LayoutName>
                ES1
                <small>保存</small>
              </LayoutName>
              <Slot $w={16}><Icon name="down" size={14} stroke={1.8} /></Slot>
              <Divider $gap={2} />
              <Slot $w={31}><Icon name="search" size={17} stroke={1.6} /></Slot>
              <Slot $w={27}><Icon name="gear" size={18} stroke={1.6} /></Slot>
              <Slot $w={29}><Icon name="full" size={17} stroke={1.8} /></Slot>
              <Slot $w={29}><Icon name="camera" size={19} stroke={1.6} /></Slot>
              <Publish>发表</Publish>
            </ToolbarRight>
          </Toolbar>

          <Body>
            <LeftRail>
              {leftTools.map((name, i) =>
                name === '-' ? (
                  <RailLine key={i} $w={27} $gap={4.3} />
                ) : (
                  <ToolButton
                    key={name}
                    $active={name === 'magnet'}
                    $color={name === 'cross' ? '#273f9f' : name === 'magnet' ? '#b9c8f8' : undefined}
                  >
                    <Icon name={name} size={name === 'cross' ? 20.6 : 19.5} />
                  </ToolButton>
                )
              )}
            </LeftRail>

            <Center>
              <ChartPane>
                <Chart />
                <Legend>
                  <LegendTitle>纳斯达克100 E-mini 期货 · 5 · CME_MINI</LegendTitle>
                  <RewindDot><Icon name="rewind" size={10} fill="#fff" /></RewindDot>
                  <Quote $w={59}>开=<b>13065.50</b></Quote>
                  <Quote $w={59}>高=<b>13075.00</b></Quote>
                  <Quote $w={59}>低=<b>13063.50</b></Quote>
                  <Quote $w={130}>收=<b>13072.75 &nbsp;+7.75 (+0.06%)</b></Quote>
                </Legend>
                <Collapse>
                  <Icon name="down" size={10} stroke={2.5} />
                  17
                </Collapse>
              </ChartPane>

              <BarRow $h={36} $gap={1} $pad={532} $bottom={2}>
                <Slot $w={24}><Icon name="goBar" size={17} stroke={1.6} /></Slot>
                <Divider $gap={5} />
                <Slot $w={24}><Icon name="play" size={17} stroke={1.6} /></Slot>
                <Slot $w={32}><Icon name="step" size={17} stroke={1.6} /></Slot>
                <Slot $w={25}>10x</Slot>
                <Divider $gap={5} />
                <Slot $w={26}><Icon name="stepEnd" size={17} stroke={1.6} /></Slot>
                <Push>
                  <TradeButton $w={54} $bg="#f7303f">卖出</TradeButton>
                  <TradeButton $w={18} $bg="#2a2e39" $fg="#e3e4e8">1</TradeButton>
                  <TradeButton $w={53.5} $bg="#2962ff">买入</TradeButton>
                  <TradeButton $w={54} $bg="transparent" $line="#2d313c" $fg="#4a4d58">展平</TradeButton>
                  <Slot $w={43}><Icon name="close" size={20} /></Slot>
                  <Slot $w={5} />
                </Push>
              </BarRow>

              <BarRow $h={28} $gap={1.5} $pad={12.5} $top={1.5} $round="0 0 3px 3px">
                {ranges.map(([text, w]) => (
                  <RowItem key={text} $w={w}>{text}</RowItem>
                ))}
                <Divider $h={15} />
                <Slot $w={38}><Icon name="goDate" size={18} /></Slot>
                <Push>
                  <RowItem $w={100}>22:04:24 (UTC-7)</RowItem>
                  <RowItem $w={52}>ETH</RowItem>
                  <RowItem $w={32}>调整</RowItem>
                  <RowItem $w={19}>%</RowItem>
                  <RowItem $w={25}>log</RowItem>
                  <RowItem $w={30}>自动</RowItem>
                </Push>
              </BarRow>

              <BarRow $h={30} $gap={2.5} $pad={12} $round="3px 3px 0 0">
                <RowItem $w={57}>股票筛选器</RowItem>
                <RowItem $w={29}><Icon name="down" size={14} stroke={1.6} /></RowItem>
                <RowItem $w={75}>Pine编辑器</RowItem>
                <RowItem $w={76}>策略测试器</RowItem>
                <RowItem $w={60}>交易面板</RowItem>
                <Push>
                  <Slot $w={27}><Icon name="up" size={18} /></Slot>
                  <Slot $w={27}><Icon name="full" size={17} stroke={1.6} /></Slot>
                  <Slot $w={4} />
                </Push>
              </BarRow>
            </Center>

            <RightRail>
              {widgets.map((name, i) =>
                name === '-' ? (
                  <RailLine key={i} $w={25} $gap={4} />
                ) : (
                  <WidgetButton key={name}>
                    <Icon name={name} />
                    {name === 'chat' && <Badge $top={3} $left={20} $size={10}>1</Badge>}
                  </WidgetButton>
                )
              )}
              <Spacer />
              <WidgetButton><Icon name="layers" /></WidgetButton>
              <WidgetButton><Icon name="help" /></WidgetButton>
            </RightRail>
          </Body>
        </Window>
      </Desktop>
      <Signature>
        <strong>知乎</strong>
        <span>@</span>
        弗里曼记着笔记
      </Signature>
    </>
  )
}
